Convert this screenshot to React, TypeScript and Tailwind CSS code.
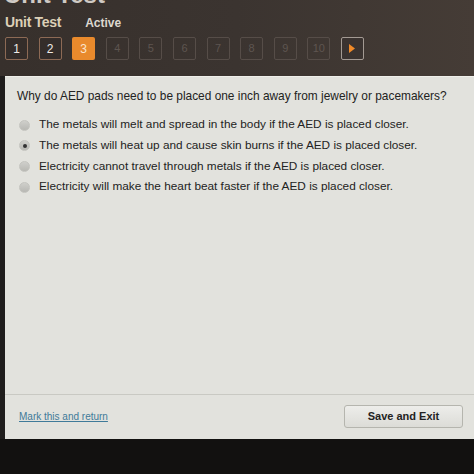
import React from 'react';

const options = [
  'The metals will melt and spread in the body if the AED is placed closer.',
  'The metals will heat up and cause skin burns if the AED is placed closer.',
  'Electricity cannot travel through metals if the AED is placed closer.',
  'Electricity will make the heart beat faster if the AED is placed closer.',
];

const pages = [1, 2, 3, 4, 5, 6, 7, 8, 9, 10];

export default function App() {
  const selected = 1;
  const current = 3;

  return (
    <div
      className="w-[474px] h-[474px] overflow-hidden bg-[#141312] flex flex-col"
      style={{ fontFamily: '"Liberation Sans", Arial, sans-serif' }}
    >
      {/* header */}
      <div className="bg-gradient-to-r from-[#37302c] via-[#3b3430] to-[#453c36] pb-[16px]">
        <div className="h-[8px] overflow-visible relative">
          <div className="absolute left-[4px] top-[-17px] text-[24px] font-bold text-[#cfcac4] leading-none">Unit Test</div>
        </div>
        <div className="flex items-baseline pl-[5px] mt-[4px] h-[16px]">
          <span className="text-[14px] font-bold text-[#dccfb6] tracking-[-0.3px]">Unit Test</span>
          <span className="text-[12px] font-bold text-[#ddd8cf] ml-[24px]">Active</span>
        </div>
        <div className="flex pl-[5px] mt-[9px] gap-[10.6px]">
          {pages.map((p) => {
            const done = p < current;
            const active = p === current;
            return (
              <div
                key={p}
                className={
                  active
                    ? 'w-[23px] h-[23px] flex items-center justify-center rounded-[2px] bg-[#e98a2c] text-[#fbe6cf] text-[12px]'
                    : done
                    ? 'w-[23px] h-[23px] flex items-center justify-center rounded-[2px] border border-[#8d6a55] bg-[#342d2a] text-[#f1ebe6] text-[12px]'
                    : 'w-[23px] h-[23px] flex items-center justify-center rounded-[2px] border border-[#564d48] text-[#5e5550] text-[11px]'
                }
              >
                {p}
              </div>
            );
          })}
          <div className="w-[23px] h-[23px] flex items-center justify-center rounded-[2px] border border-[#a39a93] bg-[#3a3330]">
            <svg width="6" height="9" viewBox="0 0 6 9">
              <path d="M0 0 L6 4.5 L0 9 Z" fill="#f08a28" />
            </svg>
          </div>
        </div>
      </div>

      {/* panel */}
      <div className="flex bg-[#1b1918]">
        <div className="w-[5px] shrink-0 bg-[#1f1d1c]" />
        <div className="flex-1 h-[363px] bg-[#e2e2dd] border-t border-[#efefea] flex flex-col">
          <div className="flex-1 pl-[12px] pt-[10px]">
            <p className="text-[11.9px] text-[#222] leading-[18px] whitespace-nowrap">
              Why do AED pads need to be placed one inch away from jewelry or pacemakers?
            </p>
            <div className="mt-[11px] flex flex-col gap-[2.7px]">
              {options.map((o, i) => (
                <label key={i} className="flex items-center h-[18px]">
                  <span className="ml-[2px] w-[11px] h-[11px] rounded-full bg-gradient-to-b from-[#cfcfcb] to-[#b8b8b3] border border-[#c4c4bf] flex items-center justify-center">
                    {i === selected && <span className="w-[4px] h-[4px] rounded-full bg-[#333]" />}
                  </span>
                  <span className="ml-[9px] text-[11.8px] text-[#222] whitespace-nowrap">{o}</span>
                </label>
              ))}
            </div>
          </div>
          <div className="h-[45px] border-t border-[#c9c9c3] flex items-center justify-between pl-[14px] pr-[12px]">
            <a href="#" className="text-[10px] text-[#3f7a99] underline mt-[-2px]">Mark this and return</a>
            <button className="w-[119px] h-[23px] mr-[-1px] mt-[-2px] rounded-[3px] border border-[#b5b5ae] bg-gradient-to-b from-[#ededea] to-[#dcdcd7] text-[11px] font-bold text-[#222]">
              Save and Exit
            </button>
          </div>
        </div>
      </div>
      <div className="flex-1 bg-[#121110]" />
    </div>
  );
}
